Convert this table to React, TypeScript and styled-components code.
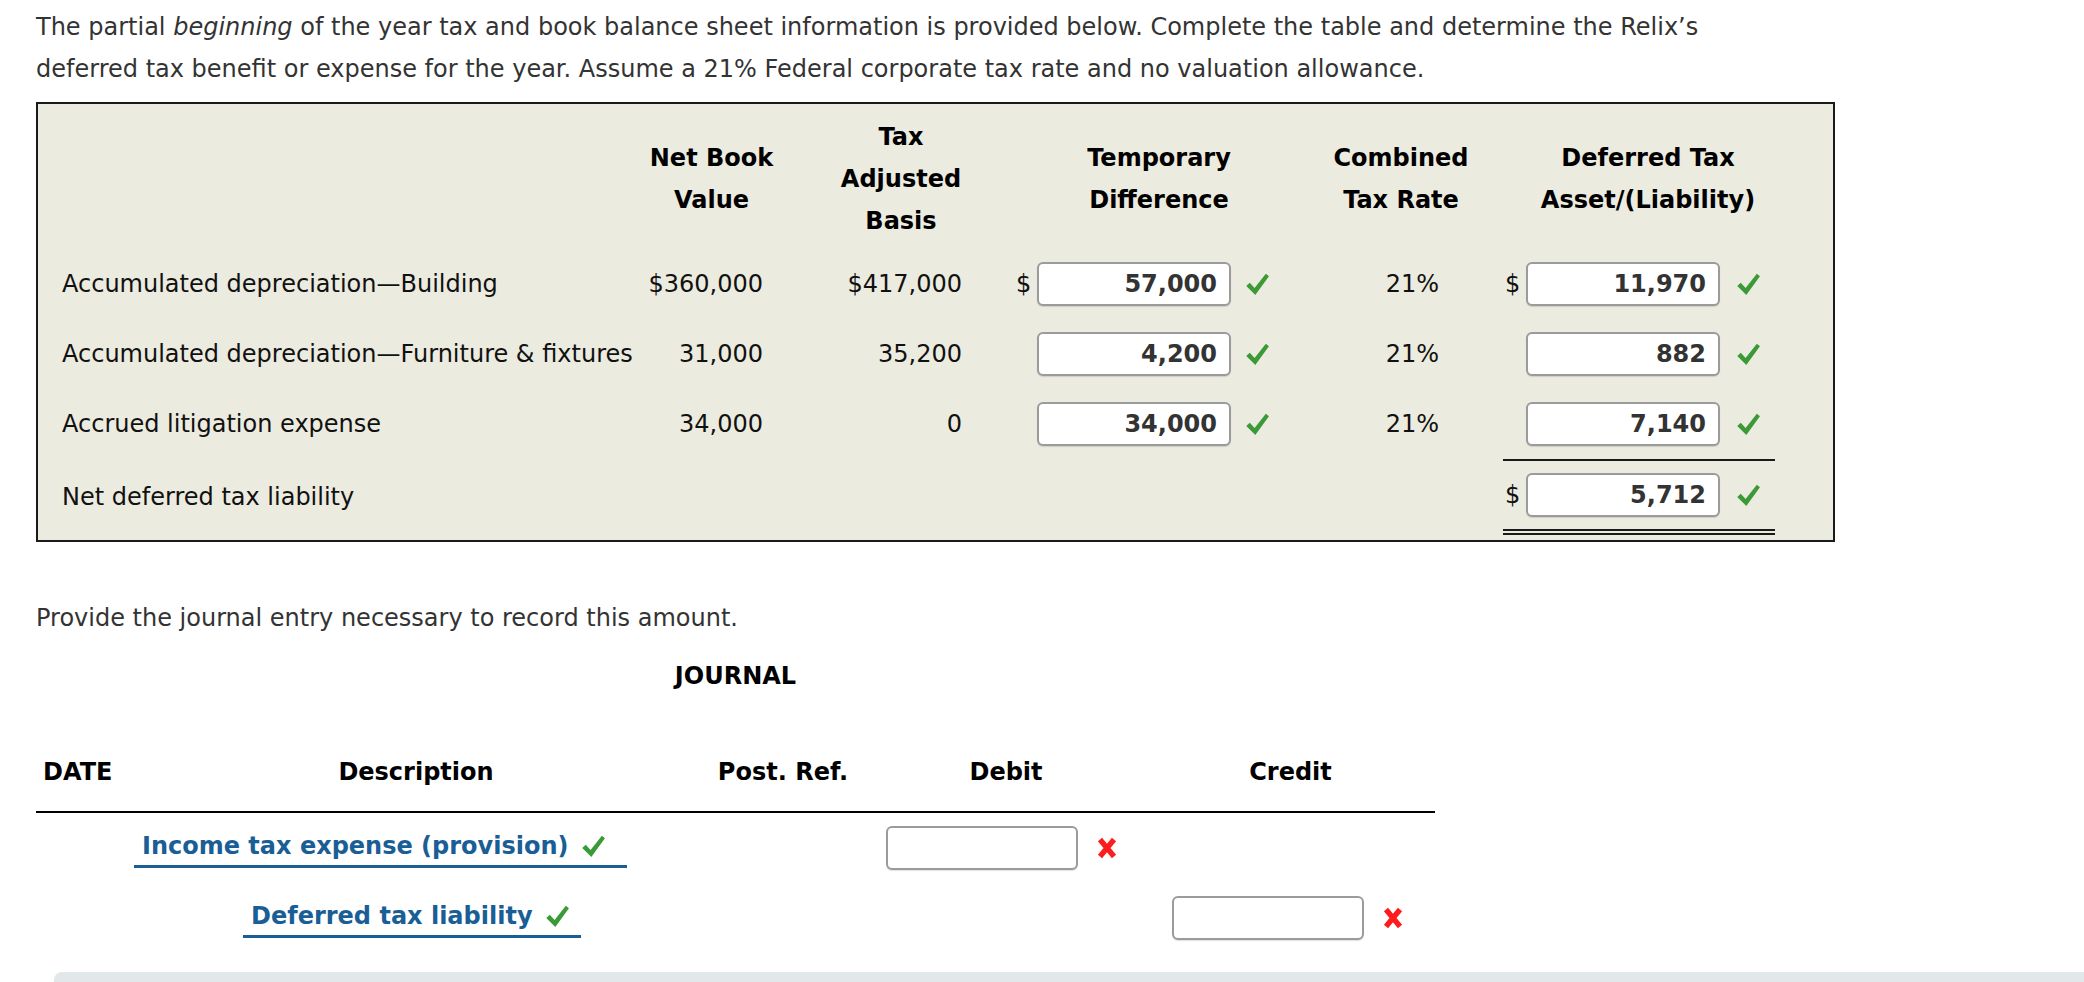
import styled, { createGlobalStyle } from "styled-components";

const GlobalStyle = createGlobalStyle`
  body {
    margin: 0;
    background: #ffffff;
    font-family: "DejaVu Sans", Verdana, "Noto Sans", sans-serif;
    color: #333333;
  }
`;

const ink = "#1a1a1a";
const sheetBg = "#ecebdf";
const blue = "#1a5e96";

const Page = styled.div`
  padding: 6px 0 0 36px;
`;

const Prompt = styled.p<{ $top?: number }>`
  margin: ${({ $top }) => $top ?? 0}px 0 0;
  font-size: 24px;
  line-height: 42px;
  color: #333333;
  width: 1740px;
`;

const SheetBox = styled.div`
  margin-top: 12px;
  width: 1799px;
  box-sizing: border-box;
  border: 2px solid ${ink};
  background: ${sheetBg};
  padding: 0 40px 5px 24px;
`;

const SheetGrid = styled.div`
  display: grid;
  grid-template-columns: 578px 143px 227px 280px 213px 1fr;
  grid-template-rows: 145px repeat(3, 70px) auto;
  font-size: 24px;
  color: #111111;
`;

const HeadCell = styled.div<{ $pl?: number }>`
  align-self: center;
  padding: 5px 0 0 ${({ $pl }) => $pl ?? 0}px;
  text-align: center;
  font-weight: bold;
  line-height: 42px;
  white-space: nowrap;
  color: #000000;
`;

const Label = styled.div`
  align-self: center;
  line-height: 42px;
  white-space: nowrap;
`;

const Amount = styled.div<{ $pr?: number }>`
  align-self: center;
  text-align: right;
  padding-right: ${({ $pr }) => $pr ?? 0}px;
  line-height: 42px;
`;

const MoneyCell = styled.div<{ $pl?: number }>`
  display: flex;
  align-items: center;
  padding-left: ${({ $pl }) => $pl ?? 0}px;
`;

const Dollar = styled.span<{ $w: number; $pl?: number }>`
  display: inline-block;
  box-sizing: border-box;
  width: ${({ $w }) => $w}px;
  padding-left: ${({ $pl }) => $pl ?? 0}px;
  line-height: 42px;
`;

const Answer = styled.input<{ $w?: number }>`
  width: ${({ $w }) => $w ?? 194}px;
  height: 44px;
  box-sizing: border-box;
  border: 2px solid #9b9b9b;
  border-radius: 6px;
  background: #ffffff;
  padding: 0 12px 0 8px;
  text-align: right;
  font-family: "DejaVu Sans", Verdana, sans-serif;
  font-size: 24px;
  font-weight: bold;
  color: #333333;
  box-shadow: 0 1px 1px rgba(0, 0, 0, 0.12);
  outline: none;
`;

const TotalBox = styled.div`
  width: 272px;
  box-sizing: border-box;
  border-top: 2px solid ${ink};
  border-bottom: 6px double ${ink};
  padding: 12px 0;
  display: flex;
  align-items: center;
`;

const Mark = styled.svg<{ $ml: number }>`
  flex: none;
  margin-left: ${({ $ml }) => $ml}px;
`;

const Check = ({ ml = 14 }: { ml?: number }) => (
  <Mark $ml={ml} width="25" height="25" viewBox="0 0 24 24">
    <path
      d="M1.2 13.4 L4.6 10.4 L9.2 15.4 L20 1.6 L23 4 L9.9 22 Z"
      fill="#3b9a37"
    />
  </Mark>
);

const Cross = () => (
  <Mark $ml={19} width="20" height="22" viewBox="0 0 20 22">
    <path
      d="M3 2.5 L17 19.5 M17 2.5 L3 19.5"
      stroke="#ff1c1c"
      strokeWidth="5.4"
    />
  </Mark>
);

const Journal = styled.div`
  width: 1399px;
  font-size: 24px;
`;

const JournalTitle = styled.div`
  margin-top: 16px;
  text-align: center;
  font-weight: bold;
  line-height: 42px;
  color: #000000;
`;

const JournalGrid = styled.div`
  display: grid;
  grid-template-columns: 164px 432px 234px 280px 1fr;
`;

const JournalHead = styled(JournalGrid)`
  margin-top: 54px;
  padding-bottom: 18px;
  border-bottom: 2px solid #000000;
`;

const JHeadCell = styled.div<{ $pl?: number; $left?: boolean }>`
  padding-left: ${({ $pl }) => $pl ?? 0}px;
  text-align: ${({ $left }) => ($left ? "left" : "center")};
  font-weight: bold;
  line-height: 42px;
  color: #000000;
`;

const EntryRow = styled(JournalGrid)`
  height: 70px;
`;

const DescCell = styled.div<{ $pl: number }>`
  grid-column: 1 / 4;
  padding-left: ${({ $pl }) => $pl}px;
  padding-top: 14px;
`;

const AccountPick = styled.div<{ $w: number }>`
  width: ${({ $w }) => $w}px;
  box-sizing: border-box;
  display: flex;
  align-items: center;
  padding-left: 8px;
  border-bottom: 3px solid ${blue};
  color: ${blue};
  font-weight: bold;
  line-height: 38px;
  white-space: nowrap;
`;

const AmountCell = styled.div<{ $col: number; $pl: number }>`
  grid-column: ${({ $col }) => $col};
  display: flex;
  align-items: center;
  padding-left: ${({ $pl }) => $pl}px;
`;

const FooterBar = styled.div`
  margin: 19px 0 0 18px;
  height: 20px;
  background: #e2e7ea;
  border-radius: 8px 0 0 0;
`;

interface IRow {
  label: string;
  book: string;
  tax: string;
  diff: string;
  rate: string;
  deferred: string;
  dollar: boolean;
}

const rows: IRow[] = [
  {
    label: "Accumulated depreciation\u2014Building",
    book: "$360,000",
    tax: "$417,000",
    diff: "57,000",
    rate: "21%",
    deferred: "11,970",
    dollar: true,
  },
  {
    label: "Accumulated depreciation\u2014Furniture & fixtures",
    book: "31,000",
    tax: "35,200",
    diff: "4,200",
    rate: "21%",
    deferred: "882",
    dollar: false,
  },
  {
    label: "Accrued litigation expense",
    book: "34,000",
    tax: "0",
    diff: "34,000",
    rate: "21%",
    deferred: "7,140",
    dollar: false,
  },
];

const App = () => {
  return (
    <Page>
      <GlobalStyle />
      <Prompt>
        The partial <i>beginning</i> of the year tax and book balance sheet
        information is provided below. Complete the table and determine the
        Relix’s deferred tax benefit or expense for the year. Assume a 21%
        Federal corporate tax rate and no valuation allowance.
      </Prompt>

      <SheetBox>
        <SheetGrid>
          <div />
          <HeadCell>
            Net Book
            <br />
            Value
          </HeadCell>
          <HeadCell $pl={9}>
            Tax
            <br />
            Adjusted
            <br />
            Basis
          </HeadCell>
          <HeadCell $pl={18}>
            Temporary
            <br />
            Difference
          </HeadCell>
          <HeadCell $pl={9}>
            Combined
            <br />
            Tax Rate
          </HeadCell>
          <HeadCell>
            Deferred Tax
            <br />
            Asset/(Liability)
          </HeadCell>

          {rows.map((row) => [
            <Label key={`${row.label}-l`}>{row.label}</Label>,
            <Amount key={`${row.label}-b`} $pr={20}>
              {row.book}
            </Amount>,
            <Amount key={`${row.label}-t`} $pr={48}>
              {row.tax}
            </Amount>,
            <MoneyCell key={`${row.label}-d`} $pl={6}>
              <Dollar $w={21}>{row.dollar ? "$" : ""}</Dollar>
              <Answer readOnly value={row.diff} />
              <Check />
            </MoneyCell>,
            <Amount key={`${row.label}-r`} $pr={64}>
              {row.rate}
            </Amount>,
            <MoneyCell key={`${row.label}-x`} $pl={2}>
              <Dollar $w={21}>{row.dollar ? "$" : ""}</Dollar>
              <Answer readOnly value={row.deferred} />
              <Check ml={16} />
            </MoneyCell>,
          ])}

          <Label>Net deferred tax liability</Label>
          <div />
          <div />
          <div />
          <div />
          <div>
            <TotalBox>
              <Dollar $w={23} $pl={2}>
                $
              </Dollar>
              <Answer readOnly value="5,712" />
              <Check ml={16} />
            </TotalBox>
          </div>
        </SheetGrid>
      </SheetBox>

      <Prompt $top={55}>Provide the journal entry necessary to record this amount.</Prompt>

      <Journal>
        <JournalTitle>JOURNAL</JournalTitle>
        <JournalHead>
          <JHeadCell $left $pl={7}>
            DATE
          </JHeadCell>
          <JHeadCell>Description</JHeadCell>
          <JHeadCell $pl={68}>Post. Ref.</JHeadCell>
          <JHeadCell>Debit</JHeadCell>
          <JHeadCell>Credit</JHeadCell>
        </JournalHead>

        <EntryRow>
          <DescCell $pl={98}>
            <AccountPick $w={493}>
              Income tax expense (provision)
              <Check ml={12} />
            </AccountPick>
          </DescCell>
          <AmountCell $col={4} $pl={20}>
            <Answer readOnly value="" $w={192} />
            <Cross />
          </AmountCell>
        </EntryRow>

        <EntryRow>
          <DescCell $pl={207}>
            <AccountPick $w={338}>
              Deferred tax liability
              <Check ml={12} />
            </AccountPick>
          </DescCell>
          <AmountCell $col={5} $pl={26}>
            <Answer readOnly value="" $w={192} />
            <Cross />
          </AmountCell>
        </EntryRow>
      </Journal>

      <FooterBar />
    </Page>
  );
};

export default App;
